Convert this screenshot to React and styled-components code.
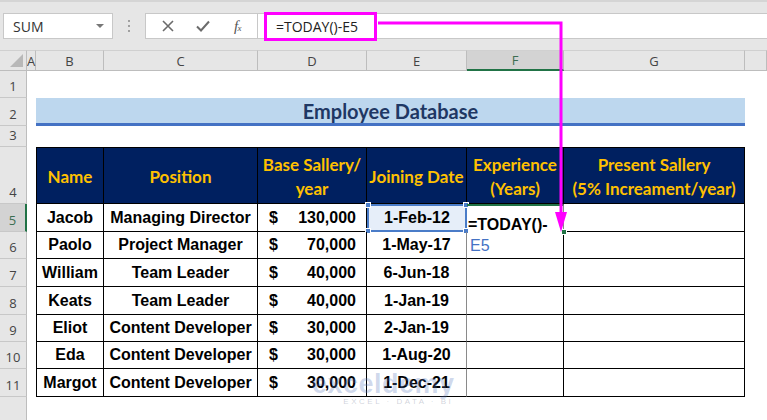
import React from "react";
import styled, { createGlobalStyle, css } from "styled-components";

const GlobalStyle = createGlobalStyle`
  html, body { margin: 0; padding: 0; background: #ffffff; overflow: hidden; }
  * { box-sizing: border-box; }
`;

const Page = styled.div`
  position: relative;
  width: 767px;
  height: 420px;
  overflow: hidden;
  background: #ffffff;
  font-family: "Liberation Sans", Arial, sans-serif;
`;

/* ---------- formula bar ---------- */
const FormulaBar = styled.div`
  display: flex;
  align-items: center;
  height: 50px;
  padding: 0 0 0 3px;
  background: #e6e6e6;
  border-top: 2px solid #d5d5d5;
  font-family: "Open Sans", "Noto Sans", sans-serif;
`;

const NameBox = styled.div`
  display: flex;
  align-items: center;
  justify-content: space-between;
  width: 110px;
  height: 26px;
  padding: 0 8px 0 9px;
  background: #ffffff;
  border: 1px solid #c8c8c8;
  font-size: 14px;
  color: #333333;
`;

const DropArrow = styled.span`
  width: 0;
  height: 0;
  border-left: 4px solid transparent;
  border-right: 4px solid transparent;
  border-top: 4px solid #777777;
`;

const Dots = styled.div`
  display: flex;
  flex-direction: column;
  gap: 3px;
  width: 32px;
  align-items: center;
  span {
    width: 2px;
    height: 2px;
    background: #a0a0a0;
  }
`;

const FxButtons = styled.div`
  display: flex;
  align-items: center;
  justify-content: space-around;
  width: 113px;
  height: 26px;
  background: #ffffff;
  border: 1px solid #c8c8c8;
  padding: 0 2px 0 4px;
`;

const FxButton = styled.span`
  display: flex;
  align-items: center;
  justify-content: center;
  width: 30px;
  color: #666666;
`;

const FxText = styled.span`
  font-family: "Liberation Serif", "DejaVu Serif", serif;
  font-style: italic;
  font-size: 15px;
  color: #555555;
  letter-spacing: -0.5px;
  sub {
    font-size: 9px;
    vertical-align: baseline;
  }
`;

const FormulaInput = styled.div`
  flex: 1;
  display: flex;
  align-items: center;
  height: 26px;
  background: #ffffff;
  border-top: 1px solid #c8c8c8;
  border-bottom: 1px solid #c8c8c8;
  padding-left: 6px;
`;

const FormulaText = styled.div`
  display: flex;
  align-items: center;
  width: 113px;
  height: 29px;
  padding-left: 9px;
  border: 3px solid #ff00ff;
  font-size: 14px;
  color: #222222;
`;

/* ---------- sheet ---------- */
const Sheet = styled.div`
  display: grid;
  grid-template-columns: 27px 9px 68px 154px 109px 100px 97px 181px 1fr;
  grid-template-rows: 21px 27px 28px 21px 57px 28px 27px 28px 28px 27px 27px 28px 1fr;
  height: 370px;
`;

const headerBase = css`
  background: #e6e6e6;
  color: #444444;
  font-family: "Open Sans", "Noto Sans", sans-serif;
  font-size: 13px;
  display: flex;
  justify-content: center;
`;

const Corner = styled.div`
  grid-column: 1;
  grid-row: 1;
  background: #e6e6e6;
  border-right: 1px solid #bdbdbd;
  border-bottom: 1px solid #bdbdbd;
  border-top: 1px solid #d0d0d0;
  position: relative;
  &::after {
    content: "";
    position: absolute;
    right: 3px;
    bottom: 3px;
    width: 0;
    height: 0;
    border-left: 13px solid transparent;
    border-bottom: 13px solid #b8b8b8;
  }
`;

const ColHead = styled.div`
  ${headerBase};
  grid-row: 1;
  grid-column: ${(p) => p.$col};
  align-items: center;
  border-top: 1px solid #d0d0d0;
  border-right: 1px solid #bdbdbd;
  border-bottom: 1px solid #bdbdbd;
  ${(p) =>
    p.$active &&
    css`
      background: #d3d3d3;
      color: #3c6e52;
      border-bottom: 2px solid #217346;
    `}
`;

const RowHead = styled.div`
  ${headerBase};
  grid-column: 1;
  grid-row: ${(p) => p.$row};
  align-items: flex-end;
  padding-bottom: 2px;
  border-right: 1px solid #bdbdbd;
  border-bottom: 1px solid #c8c8c8;
  ${(p) =>
    p.$active &&
    css`
      background: #d3d3d3;
      color: #3c6e52;
      border-right: 2px solid #217346;
    `}
`;

const RowHeadFill = styled.div`
  grid-column: 1;
  grid-row: 13;
  background: #e6e6e6;
  border-right: 1px solid #bdbdbd;
`;

const TitleBand = styled.div`
  grid-column: 3 / 9;
  grid-row: 3;
  display: flex;
  align-items: center;
  justify-content: center;
  background: #bdd7ee;
  border-bottom: 3px solid #4472c4;
  font-family: Lato, "Open Sans", sans-serif;
  font-weight: 700;
  font-size: 20px;
  color: #1f3864;
  padding-top: 1px;
`;

const HeadCell = styled.div`
  grid-row: 5;
  grid-column: ${(p) => p.$col};
  display: flex;
  align-items: center;
  justify-content: center;
  text-align: center;
  background: #002060;
  color: #ffc000;
  font-family: Lato, "Open Sans", sans-serif;
  font-weight: 700;
  font-size: 17px;
  line-height: 24px;
  padding-top: 2px;
  white-space: nowrap;
  border-top: 1.5px solid #000000;
  border-right: 1px solid #000000;
  border-bottom: 1px solid #000000;
  ${(p) => p.$first && css`border-left: 1.5px solid #000000;`}
`;

const Cell = styled.div`
  position: relative;
  grid-row: ${(p) => p.$row};
  grid-column: ${(p) => p.$col};
  display: flex;
  align-items: center;
  justify-content: ${(p) => p.$justify || "center"};
  padding: ${(p) => p.$pad || "0"};
  font-family: "Liberation Sans", Arial, sans-serif;
  font-weight: 700;
  font-size: 16px;
  color: #000000;
  white-space: nowrap;
  border-right: 1px solid #000000;
  border-bottom: ${(p) => (p.$noBottom ? "none" : p.$last ? "1.5px solid #000000" : "1px solid #000000")};
  ${(p) => p.$first && css`border-left: 1.5px solid #000000;`}
`;

const Selected = styled(Cell)`
  background: #e6eef9;
  border: 2px solid #4a7cc8;
`;

const Handle = styled.span`
  position: absolute;
  width: 6px;
  height: 6px;
  background: #4a7cc8;
  border: 1px solid #ffffff;
  ${(p) => (p.$top ? "top: -4px;" : "bottom: -4px;")}
  ${(p) => (p.$left ? "left: -4px;" : "right: -4px;")}
`;

const EditCell = styled(Cell)`
  align-items: flex-start;
  justify-content: flex-start;
  padding: 8px 0 0 1px;
  border-top: 2px solid #217346;
  border-right: 1px solid #8a8a8a;
  overflow: visible;
  z-index: 1;
`;

const EditText = styled.div`
  line-height: 21px;
  white-space: normal;
  span {
    display: block;
  }
`;

const Ref = styled.span`
  color: #4472c4;
  font-weight: 400;
  padding-left: 2px;
`;

const GreenHandle = styled.span`
  position: absolute;
  right: -4px;
  bottom: -3px;
  width: 6px;
  height: 6px;
  background: #217346;
  border: 1px solid #ffffff;
`;

const EmptyF = styled(Cell)`
  border-left: 1px solid #8a8a8a;
  margin-left: -1px;
`;

/* ---------- overlays ---------- */
const ArrowOverlay = styled.svg`
  position: absolute;
  left: 0;
  top: 0;
  pointer-events: none;
  z-index: 5;
`;

const Watermark = styled.div`
  position: absolute;
  left: 312px;
  top: 371px;
  display: flex;
  flex-direction: column;
  align-items: center;
  color: rgba(90, 120, 190, 0.28);
  pointer-events: none;
  z-index: 4;
`;

const WmTitle = styled.div`
  font-family: "Liberation Sans", Arial, sans-serif;
  font-weight: 700;
  font-size: 27px;
  line-height: 26px;
  letter-spacing: 0.5px;
`;

const WmSub = styled.div`
  font-family: "Liberation Sans", Arial, sans-serif;
  font-size: 8px;
  letter-spacing: 2.5px;
  color: rgba(120, 130, 150, 0.35);
  margin-left: 30px;
`;

const columns = ["A", "B", "C", "D", "E", "F", "G", ""];

const data = [
  ["Jacob", "Managing Director", "130,000", "1-Feb-12"],
  ["Paolo", "Project Manager", "70,000", "1-May-17"],
  ["William", "Team Leader", "40,000", "6-Jun-18"],
  ["Keats", "Team Leader", "40,000", "1-Jan-19"],
  ["Eliot", "Content Developer", "30,000", "2-Jan-19"],
  ["Eda", "Content Developer", "30,000", "1-Aug-20"],
  ["Margot", "Content Developer", "30,000", "1-Dec-21"],
];

export default function App() {
  return (
    <Page>
      <GlobalStyle />
      <FormulaBar>
        <NameBox>
          SUM
          <DropArrow />
        </NameBox>
        <Dots>
          <span />
          <span />
          <span />
        </Dots>
        <FxButtons>
          <FxButton>
            <svg width="12" height="12" viewBox="0 0 12 12">
              <path d="M1 1 L11 11 M11 1 L1 11" stroke="#6b6b6b" strokeWidth="1.6" />
            </svg>
          </FxButton>
          <FxButton>
            <svg width="14" height="12" viewBox="0 0 14 12">
              <path d="M1 6.5 L5 10.5 L13 1.5" stroke="#6b6b6b" strokeWidth="2" fill="none" />
            </svg>
          </FxButton>
          <FxButton>
            <FxText>
              f<sub>x</sub>
            </FxText>
          </FxButton>
        </FxButtons>
        <FormulaInput>
          <FormulaText>=TODAY()-E5</FormulaText>
        </FormulaInput>
      </FormulaBar>

      <Sheet>
        <Corner />
        {columns.map((c, i) => (
          <ColHead key={i} $col={i + 2} $active={c === "F"}>
            {c}
          </ColHead>
        ))}
        {Array.from({ length: 11 }, (_, i) => (
          <RowHead key={i} $row={i + 2} $active={i + 1 === 5}>
            {i + 1}
          </RowHead>
        ))}
        <RowHeadFill />

        <TitleBand>Employee Database</TitleBand>

        <HeadCell $col={3} $first>
          Name
        </HeadCell>
        <HeadCell $col={4}>Position</HeadCell>
        <HeadCell $col={5}>
          Base Sallery/
          <br />
          year
        </HeadCell>
        <HeadCell $col={6}>Joining Date</HeadCell>
        <HeadCell $col={7}>
          Experience
          <br />
          (Years)
        </HeadCell>
        <HeadCell $col={8}>
          Present Sallery
          <br />
          (5% Increament/year)
        </HeadCell>

        {data.map((r, i) => {
          const row = i + 6;
          const last = i === data.length - 1;
          return (
            <React.Fragment key={i}>
              <Cell $row={row} $col={3} $first $last={last}>
                {r[0]}
              </Cell>
              <Cell $row={row} $col={4} $last={last}>
                {r[1]}
              </Cell>
              <Cell $row={row} $col={5} $last={last} $justify="space-between" $pad="0 10px 0 11px">
                <span>$</span>
                <span>{r[2]}</span>
              </Cell>
              {i === 0 ? (
                <Selected $row={row} $col={6}>
                  {r[3]}
                  <Handle $top $left />
                  <Handle $top />
                  <Handle $left />
                  <Handle />
                </Selected>
              ) : (
                <Cell $row={row} $col={6} $last={last}>
                  {r[3]}
                </Cell>
              )}
              {i === 0 ? (
                <EditCell $row={row} $col={7} $noBottom>
                  <EditText>
                    <span>=TODAY()-</span>
                    <Ref>E5</Ref>
                  </EditText>
                  <GreenHandle />
                </EditCell>
              ) : (
                <EmptyF $row={row} $col={7} $last={last} />
              )}
              <Cell $row={row} $col={8} $last={last} />
            </React.Fragment>
          );
        })}
      </Sheet>

      <Watermark>
        <WmTitle>exceldemy</WmTitle>
        <WmSub>EXCEL · DATA · BI</WmSub>
      </Watermark>

      <ArrowOverlay width="767" height="420" viewBox="0 0 767 420">
        <path d="M378 23 L561 23 L561 216" stroke="#ff00ff" strokeWidth="3" fill="none" />
        <path d="M555 212 L567 212 L561 232 Z" fill="#ff00ff" />
      </ArrowOverlay>
    </Page>
  );
}
